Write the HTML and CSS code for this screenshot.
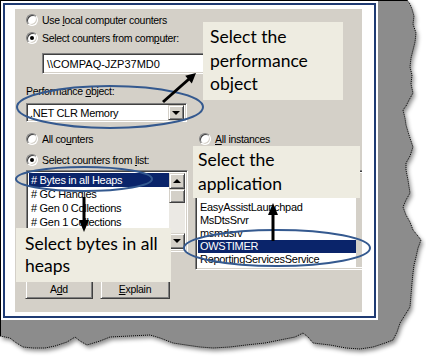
FILE: index.html
```html
<!DOCTYPE html>
<html lang="en">
	<head>
		<meta charset="UTF-8" />
		<title>Add Counters</title>
		<link rel="stylesheet" href="styles.css">
	</head>
	<body>
		<div class="sheet">
			<!-- torn paper shadow behind the screenshot -->
			<svg class="torn" width="426" height="360" viewBox="0 0 426 360">
				<polygon class="torn-fill" points="0,0 407,0 410,4 412,9 414,16 413,24 416,33 415,42 413,50 411,58 410,67 412,75 411,84 413,93 409,100 406,106 403,110 405,118 406,125 409,135 413,147 410,156 406,163 406,170 408,180 410,193 406,200 403,207 406,215 410,222 413,230 418,236 421,240 418,248 416,257 414,265 413,273 412,283 411,295 410,307 405,315 400,323 397,332 393,340 385,343 373,347 360,349 346,348 330,345 313,343 308,337 303,333 295,337 280,340 265,343 246,345 230,347 213,348 200,347 186,345 173,343 160,338 150,335 130,336 110,337 100,341 87,345 80,341 75,337 67,342 55,346 45,348 33,348 23,347 15,342 10,338 0,336" />
				<polyline class="torn-edge" points="407,0 410,4 412,9 414,16 413,24 416,33 415,42 413,50 411,58 410,67 412,75 411,84 413,93 409,100 406,106 403,110 405,118 406,125 409,135 413,147 410,156 406,163 406,170 408,180 410,193 406,200 403,207 406,215 410,222 413,230 418,236 421,240 418,248 416,257 414,265 413,273 412,283 411,295 410,307 405,315 400,323 397,332 393,340 385,343 373,347 360,349 346,348 330,345 313,343 308,337 303,333 295,337 280,340 265,343 246,345 230,347 213,348 200,347 186,345 173,343 160,338 150,335 130,336 110,337 100,341 87,345 80,341 75,337 67,342 55,346 45,348 33,348 23,347 15,342 10,338 0,336" />
				<rect x="0" y="0" width="407" height="1" fill="#000" />
				<rect x="0" y="0" width="1" height="336" fill="#000" />
			</svg>

			<div class="frame">
				<div class="outline">
					<div class="dialog">
						<label class="radio"><span class="dot"></span><span>Use <u>l</u>ocal computer counters</span></label>
						<label class="radio on second"><span class="dot"></span><span>Select counters from com<u>p</u>uter:</span></label>

						<div class="field">\\COMPAQ-JZP37MD0</div>

						<div class="caption">Performance <u>o</u>bject:</div>
						<div class="combo">
							<span class="combo-text">.NET CLR Memory</span>
							<span class="raised drop"><i class="tri down"></i></span>
						</div>

						<div class="pair">
							<label class="radio"><span class="dot"></span><span>All co<u>u</u>nters</span></label>
							<label class="radio"><span class="dot"></span><span><u>A</u>ll instances</span></label>
						</div>
						<label class="radio on from-list"><span class="dot"></span><span>Select counters from <u>l</u>ist:</span></label>

						<div class="lists">
							<div class="sunken list counters">
								<ul class="items">
									<li class="selected"># Bytes in all Heaps</li>
									<li># GC Handles</li>
									<li># Gen 0 Collections</li>
									<li># Gen 1 Collections</li>
								</ul>
								<div class="scrollbar">
									<span class="raised arrow"><i class="tri up"></i></span>
									<span class="raised thumb"></span>
									<span class="track"></span>
									<span class="raised arrow"><i class="tri down"></i></span>
								</div>
							</div>
							<div class="sunken list instances">
								<ul class="items tight">
									<li>EasyAssistLaunchpad</li>
									<li>MsDtsSrvr</li>
									<li>msmdsrv</li>
									<li class="selected">OWSTIMER</li>
									<li>ReportingServicesService</li>
								</ul>
								<div class="scrollbar">
									<span class="track"></span>
								</div>
							</div>
						</div>

						<div class="buttons">
							<span class="raised button add">A<u>d</u>d</span>
							<span class="raised button explain"><u>E</u>xplain</span>
						</div>
					</div>
				</div>
			</div>

			<!-- callouts -->
			<div class="note note-object">Select the<br>performance<br>object</div>
			<div class="note note-app">Select the<br>application</div>
			<div class="note note-bytes">Select bytes in all<br>heaps</div>

			<svg class="marks" width="426" height="360" viewBox="0 0 426 360">
				<ellipse cx="110" cy="107" rx="93" ry="21" />
				<ellipse cx="84" cy="179" rx="68" ry="12" />
				<ellipse cx="277" cy="248" rx="93" ry="18" />

				<line class="shaft" x1="163" y1="102" x2="189" y2="79" />
				<polygon class="head" points="196,73 191.8,83.4 185.2,75.8" />

				<line class="shaft" x1="84" y1="197" x2="84" y2="222" />
				<polygon class="head" points="84,232 79,220 89,220" />

				<line class="shaft" x1="273" y1="241" x2="273" y2="213" />
				<polygon class="head" points="273,203 268,215 278,215" />
			</svg>
		</div>
	</body>
</html>
```

FILE: styles.css
```css
:root {
	--face: #d4d0c8;
	--shade: #808080;
	--dark: #404040;
	--select: #0a246a;
	--note-bg: #eeece1;
	--mark: #34598f;
	--frame-blue: #1f3b73;
	--paper-shadow: #8c8c8c;
}

* {
	box-sizing: border-box;
	margin: 0;
	padding: 0;
}

body {
	background: #fff;
	font-family: 'Liberation Sans', Arial, sans-serif;
	font-size: 10.5px;
	letter-spacing: -0.3px;
	color: #000;
}

.sheet {
	position: relative;
	width: 426px;
	height: 360px;
	overflow: hidden;
}

/* Torn paper */
.torn {
	position: absolute;
	top: 0;
	left: 0;
}

.torn-fill {
	fill: var(--paper-shadow);
	filter: drop-shadow(2px 3px 2px rgba(0, 0, 0, 0.45));
}

.torn-edge {
	fill: none;
	stroke: #000;
	stroke-width: 1;
	stroke-dasharray: 1 1;
}

.frame {
	position: relative;
	margin: 1px 0 0 1px;
	width: 377px;
	height: 319px;
	padding: 2px;
	background: #fff;
}

.outline {
	height: 100%;
	border: 2px solid var(--frame-blue);
	padding: 4px 12px 4px 10px;
}

/* Windows classic dialog */
.dialog {
	width: 347px;
	height: 303px;
	background: var(--face);
	padding: 3px 0 0 11px;
	display: flex;
	flex-direction: column;
	align-items: flex-start;
	overflow: hidden;
}

.radio {
	display: flex;
	align-items: center;
	gap: 4px;
	height: 16px;
	white-space: nowrap;
}

.radio.second {
	margin-top: 2px;
}

.radio.from-list {
	margin-top: 5px;
}

.dot {
	width: 12px;
	height: 12px;
	border-radius: 50%;
	background: #fff;
	border: 1px solid;
	border-color: var(--shade) #fff #fff var(--shade);
	box-shadow: inset 1px 1px 0 var(--dark), inset -1px -1px 0 var(--face);
	display: flex;
	align-items: center;
	justify-content: center;
}

.radio.on .dot::after {
	content: '';
	width: 4px;
	height: 4px;
	border-radius: 50%;
	background: #000;
}

.sunken {
	background: #fff;
	border: 1px solid;
	border-color: var(--shade) #fff #fff var(--shade);
	box-shadow: inset 1px 1px 0 var(--dark), inset -1px -1px 0 var(--face);
}

.raised {
	background: var(--face);
	border: 1px solid;
	border-color: var(--face) var(--dark) var(--dark) var(--face);
	box-shadow: inset 1px 1px 0 #fff, inset -1px -1px 0 var(--shade);
}

.field {
	margin: 7px 0 0 16px;
	width: 200px;
	height: 21px;
	padding: 0 4px;
	line-height: 21px;
	white-space: nowrap;
	font-size: 11px;
	letter-spacing: 0;
}

.field,
.combo {
	background: #fff;
	border: 1px solid;
	border-color: var(--shade) #fff #fff var(--shade);
	box-shadow: inset 1px 1px 0 var(--dark), inset -1px -1px 0 var(--face);
}

.caption {
	margin-top: 10px;
	height: 14px;
	line-height: 14px;
}

.combo {
	margin-top: 5px;
	width: 161px;
	height: 19px;
	display: flex;
	align-items: center;
	justify-content: space-between;
	padding: 2px;
}

.combo-text {
	padding-left: 1px;
	font-size: 11px;
}

.drop {
	width: 16px;
	height: 15px;
	display: flex;
	align-items: center;
	justify-content: center;
}

.tri {
	width: 0;
	height: 0;
	border-left: 4px solid transparent;
	border-right: 4px solid transparent;
}

.tri.down {
	border-top: 4px solid #000;
}

.tri.up {
	border-bottom: 4px solid #000;
}

.pair {
	margin-top: 9px;
	display: grid;
	grid-template-columns: 173px auto;
}

/* List boxes */
.lists {
	margin-top: 2px;
	display: flex;
	align-items: flex-start;
	gap: 7px;
}

.list {
	display: flex;
	padding: 2px;
	overflow: hidden;
}

.counters {
	width: 162px;
	height: 82px;
}

.instances {
	width: 180px;
	height: 100px;
	flex-shrink: 0;
}

.items {
	list-style: none;
	flex: 1;
	font-size: 11px;
	overflow: hidden;
}

.items li {
	height: 14px;
	line-height: 14px;
	padding-left: 2px;
	white-space: nowrap;
}

/* first rows sit under the callout, leave their space */
.items.tight {
	padding-top: 28px;
}

.items.tight li {
	height: 13px;
	line-height: 13px;
}

.items li.selected {
	background: var(--select);
	color: #fff;
}

.scrollbar {
	width: 16px;
	display: flex;
	flex-direction: column;
}

.arrow {
	height: 16px;
	display: flex;
	align-items: center;
	justify-content: center;
}

.thumb {
	height: 14px;
}

.track {
	flex: 1;
	background: #ebe9e4;
}

.instances .track {
	background: var(--face);
}

.buttons {
	margin: 10px 0 0 -1px;
	display: flex;
	gap: 7px;
}

.button {
	height: 19px;
	line-height: 17px;
	text-align: center;
}

.add {
	width: 68px;
}

.explain {
	width: 70px;
}

/* Callouts */
.note {
	position: absolute;
	background: var(--note-bg);
	font-family: Lato, 'Open Sans', sans-serif;
	font-size: 17.5px;
	letter-spacing: 0;
	color: #000;
}

.note-object {
	left: 203px;
	top: 22px;
	width: 140px;
	height: 78px;
	padding: 3px 0 0 7px;
	line-height: 23.5px;
}

.note-app {
	left: 193px;
	top: 146px;
	width: 167px;
	height: 52px;
	padding: 2px 0 0 5px;
	line-height: 24px;
}

.note-bytes {
	left: 16px;
	top: 228px;
	width: 155px;
	height: 54px;
	padding: 5px 0 0 9px;
	line-height: 22px;
}

.marks {
	position: absolute;
	top: 0;
	left: 0;
	pointer-events: none;
}

.marks ellipse {
	fill: none;
	stroke: var(--mark);
	stroke-width: 2;
}

.marks .shaft {
	stroke: #000;
	stroke-width: 3;
}

.marks .head {
	fill: #000;
}
```
